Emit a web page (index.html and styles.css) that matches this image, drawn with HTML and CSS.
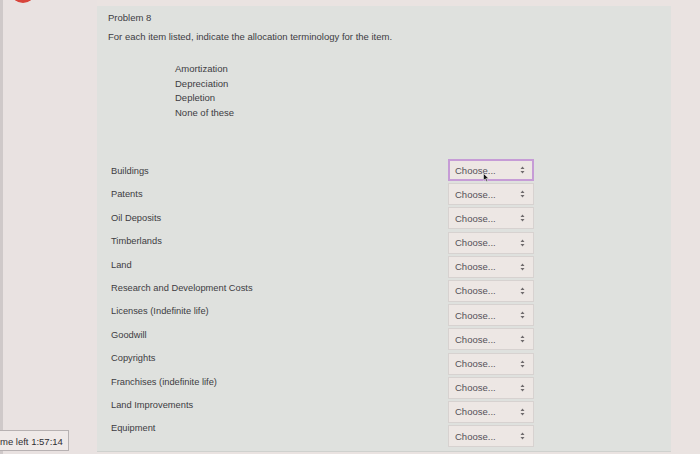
FILE: index.html
```html
<!DOCTYPE html>
<html lang="en">
  <head>
    <meta charset="UTF-8" />
    <title>Problem 8</title>
    <link rel="stylesheet" href="styles.css">
  </head>
  <body>
    <div class="screen">
      <aside class="gutter">
        <span class="dot"></span>
        <div class="timer">me left 1:57:14</div>
      </aside>

      <main class="panel">
        <h4 class="title">Problem 8</h4>
        <p class="intro">For each item listed, indicate the allocation terminology for the item.</p>

        <ul class="options">
          <li>Amortization</li>
          <li>Depreciation</li>
          <li>Depletion</li>
          <li>None of these</li>
        </ul>

        <div class="items">
          <ul class="labels">
            <li>Buildings</li>
            <li>Patents</li>
            <li>Oil Deposits</li>
            <li>Timberlands</li>
            <li>Land</li>
            <li>Research and Development Costs</li>
            <li>Licenses (Indefinite life)</li>
            <li>Goodwill</li>
            <li>Copyrights</li>
            <li>Franchises (indefinite life)</li>
            <li>Land Improvements</li>
            <li>Equipment</li>
          </ul>
          <div class="selects" id="selects"></div>
        </div>
      </main>
    </div>
    <script>
      const selectsElement = document.querySelector('#selects')
      const arrows =
        '<svg width="5" height="8" viewBox="0 0 5 8"><path d="M2.5 0.5 L4.5 3 H0.5 Z M2.5 7.5 L4.5 5 H0.5 Z" fill="#6e6a6c"/></svg>'
      for (let i = 0; i < 12; i++) {
        let div = document.createElement('div')
        div.classList.add('choose')
        if (i === 0) {
          div.classList.add('focus')
        }
        div.innerHTML = '<span>Choose...</span>' + arrows
        selectsElement.appendChild(div)
      }
      // 鼠标指针
      const cursor = document.createElement('span')
      cursor.classList.add('cursor')
      cursor.innerHTML =
        '<svg width="6" height="9" viewBox="0 0 6 9"><path d="M0.5 0.5 V7.5 L2.2 5.8 L3.6 8.5 L4.6 8 L3.3 5.4 H5.6 Z" fill="#111" stroke="#fff" stroke-width="0.5"/></svg>'
      selectsElement.firstChild.appendChild(cursor)
    </script>
  </body>
</html>
```

FILE: styles.css
```css
html,
body {
  height: 100%;
  margin: 0;
}
body {
  background-color: #eae3e1;
  font-family: 'Liberation Sans', Arial, sans-serif;
  color: #3d3c42;
  overflow: hidden;
}
ul {
  margin: 0;
  padding: 0;
  list-style: none;
}

.screen {
  display: flex;
  height: 454px;
}

.gutter {
  position: relative;
  width: 97px;
  display: flex;
  flex-direction: column;
  border-left: 3px solid #cfc9c9;
  box-sizing: border-box;
  background-color: #e9e2e1;
}
.dot {
  position: absolute;
  left: 9px;
  top: -16px;
  width: 22px;
  height: 19px;
  border-radius: 50%;
  background-color: #d8443b;
}
.timer {
  margin-top: auto;
  margin-bottom: 3px;
  margin-left: -3px;
  width: 69px;
  height: 21px;
  line-height: 21px;
  box-sizing: border-box;
  border: 1px solid #b7b1b2;
  border-left: none;
  background-color: #efe9e8;
  font-size: 9.5px;
  white-space: nowrap;
  overflow: hidden;
  color: #2f2e33;
}

.panel {
  width: 574px;
  height: 446px;
  margin-top: 6px;
  padding: 5px 0 0 11px;
  box-sizing: border-box;
  background-color: #dfe1de;
  border-bottom: 1px solid #cfd1ce;
}

.title {
  margin: 0;
  font-size: 9.5px;
  font-weight: normal;
  line-height: 14px;
}
.intro {
  margin: 5px 0 0;
  font-size: 9.5px;
  line-height: 14px;
}

.options {
  margin: 18px 0 0 67px;
  font-size: 9.5px;
}
.options li {
  height: 14.5px;
  line-height: 14.5px;
}

.items {
  display: flex;
  margin-top: 39px;
}
.labels {
  width: 337px;
  padding-left: 3px;
  font-size: 9.3px;
  margin-top: 1px;
}
.labels li {
  height: 23.4px;
  line-height: 23.4px;
}

.selects {
  width: 86px;
}
.choose {
  position: relative;
  display: flex;
  align-items: center;
  justify-content: space-between;
  height: 22px;
  margin-bottom: 2.2px;
  padding: 0 8px 0 6px;
  box-sizing: border-box;
  background-color: #ede7e4;
  border: 1px solid #d7d2d0;
  font-size: 9.5px;
  color: #555158;
}
.choose.focus {
  border: 2px solid #c69cd6;
  padding: 0 7px 0 5px;
}
.cursor {
  position: absolute;
  left: 33px;
  top: 12px;
  line-height: 0;
}
```
